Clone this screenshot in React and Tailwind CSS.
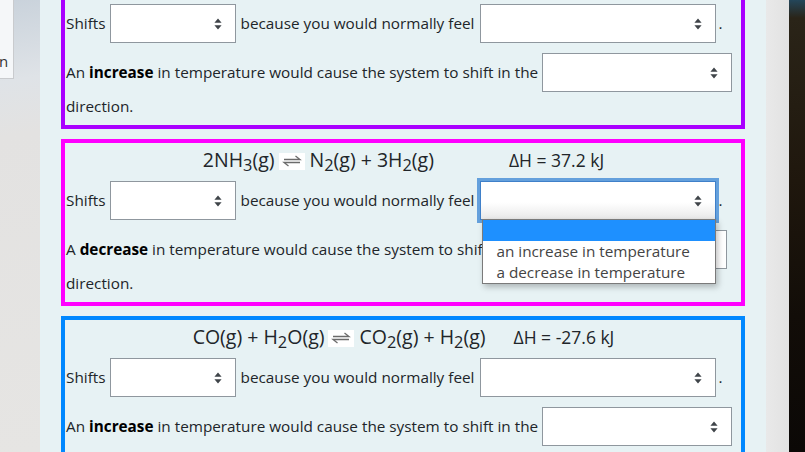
import React from 'react';

const font = { fontFamily: '"Open Sans", "Noto Sans", sans-serif' };

const UpDown = () => (
  <svg width="8" height="12" viewBox="0 0 8 12" className="shrink-0">
    <path d="M4 0.6 L7.6 4.8 H0.4 Z M4 11.4 L0.4 7.2 H7.6 Z" fill="#3f4449" />
  </svg>
);

const Equil = () => (
  <span className="ml-[4px] mr-[5px] inline-flex h-[17px] w-[26px] items-center justify-center bg-white">
    <svg width="20" height="12" viewBox="0 0 20 12">
      <path d="M2 4.5 H18 L13.5 1 M18 7.5 H2 L6.5 11" fill="none" stroke="#6b6b6b" strokeWidth="1.3" />
    </svg>
  </span>
);

const Sub = ({ children }) => <sub className="text-[84%]">{children}</sub>;

const Select = ({ className, focused, children }) => (
  <span
    className={
      'relative inline-flex h-[39px] shrink-0 items-center justify-end border pr-[13px] ' +
      (focused
        ? 'border-[#3f80c9] bg-gradient-to-b from-white from-55% to-[#e9e9e9] shadow-[0_0_0_3px_#64a0dc] z-10 '
        : 'border-[#8f979e] bg-white ') +
      className
    }
  >
    <UpDown />
    {children}
  </span>
);

const Dropdown = () => (
  <div className="absolute left-[1px] top-full z-20 w-[234px] border border-[#7a7a7a] bg-white text-[15.3px] text-[#444] shadow-[2px_3px_6px_rgba(0,0,0,0.25)]">
    <div className="h-[21px] bg-[#1e90ff]" />
    <div className="h-[21px] pl-[13px] leading-[21px]">an increase in temperature</div>
    <div className="h-[21px] pl-[13px] leading-[21px]">a decrease in temperature</div>
  </div>
);

const Card = ({ border, equation, dh, dhGap, change, focused }) => (
  <div className={'w-[684px] border-4 pl-[1px] pb-[5px] text-[15.3px] text-[#212529] ' + border}>
    <div className="flex h-[34px] items-center justify-center whitespace-nowrap">
      <span className="text-[19.5px]">{equation}</span>
      <span className={'text-[17.5px] ' + dhGap}>{dh}</span>
    </div>
    <div className="mt-[4px] flex h-[39px] items-center whitespace-nowrap">
      <span>Shifts</span>
      <Select className="ml-[4px] w-[126px]" />
      <span className="ml-[5px]">because you would normally feel</span>
      <Select className="ml-[6px] w-[236px]" focused={focused}>
        {focused && <Dropdown />}
      </Select>
      <span className="ml-[2px]">.</span>
    </div>
    <div className="mt-[10px] flex h-[39px] items-center whitespace-nowrap">
      <span>
        {change[0]} <b className="font-bold text-black">{change[1]}</b> in temperature would cause the system to shift in the
      </span>
      <Select className="ml-[4px] w-[190px]" />
    </div>
    <div className="flex h-[28px] items-center">direction.</div>
  </div>
);

export default function App() {
  return (
    <div className="flex h-[452px] w-[805px] overflow-hidden" style={font}>
      <div className="w-[40px] shrink-0 bg-[linear-gradient(170deg,#c9d2db_0%,#dfe3e7_18%,#e3e2e1_30%,#e6e5e3_100%)]">
        <div className="h-[79px] w-[14px] overflow-hidden border-b border-r border-[#c9cbce] bg-[#f5f7f9] pt-[50px] text-[15px] leading-[22px] text-[#333]">
          <span className="-ml-[1px]">n</span>
        </div>
      </div>
      <div className="w-[726px] shrink-0 bg-[#e7f2f4] pl-[21px]">
        <div className="-mt-[38px] flex flex-col gap-[10px]">
          <Card
            border="border-[#aa00ff]"
            equation={
              <>
                N<Sub>2</Sub>(g) + O<Sub>2</Sub>(g)
                <Equil />
                2NO(g)
              </>
            }
            dh="ΔH = 181 kJ"
            dhGap="ml-[60px]"
            change={['An', 'increase']}
          />
          <Card
            border="border-[#ff00ff]"
            equation={
              <>
                2NH<Sub>3</Sub>(g)
                <Equil />
                N<Sub>2</Sub>(g) + 3H<Sub>2</Sub>(g)
              </>
            }
            dh="ΔH = 37.2 kJ"
            dhGap="ml-[75px]"
            change={['A', 'decrease']}
            focused
          />
          <Card
            border="border-[#0088ff]"
            equation={
              <>
                CO(g) + H<Sub>2</Sub>O(g)
                <Equil />
                CO<Sub>2</Sub>(g) + H<Sub>2</Sub>(g)
              </>
            }
            dh="ΔH = -27.6 kJ"
            dhGap="ml-[28px]"
            change={['An', 'increase']}
          />
        </div>
      </div>
      <div className="w-[23px] shrink-0 bg-[linear-gradient(90deg,#e9e9e9,#e2e2e2)]" />
      <div className="flex-1 bg-[linear-gradient(180deg,#24465a_0%,#2a2418_4%,#1f170d_40%,#120d08_70%,#0b0806_100%)]" />
    </div>
  );
}
